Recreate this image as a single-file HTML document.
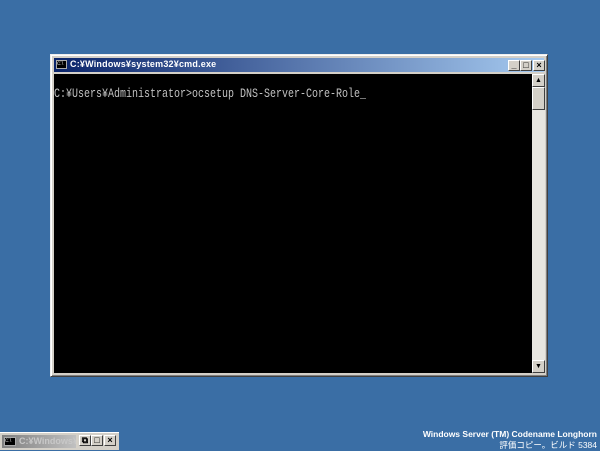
<!DOCTYPE html>
<html><head><style>
body{margin:0;width:600px;height:450px;background:#3a6ea5;position:relative;overflow:hidden;font-family:"Liberation Sans","Noto Sans CJK JP",sans-serif}
.win{position:absolute;left:50px;top:54px;width:496px;height:321px;background:#d4d0c8;border:1px solid;border-color:#eee #404040 #404040 #eee;box-shadow:inset 1px 1px #fff,inset -1px -1px #808080}
.title{position:absolute;left:3px;top:3px;width:490px;height:14px;background:linear-gradient(to right,#0a246a,#a6caf0)}
.title span{position:absolute;left:16px;top:1px;color:#fff;font-size:9px;font-weight:bold;letter-spacing:0.2px;white-space:nowrap}
.ico{position:absolute;left:2px;top:2px;width:11px;height:9px;background:#000;border:1px solid #aaa;box-sizing:border-box;color:#ccc;font-size:6px;line-height:7px;overflow:hidden}
.btn{position:absolute;top:2px;width:12px;height:11px;background:#d4d0c8;box-sizing:border-box;border:1px solid;border-color:#fff #404040 #404040 #fff;font-size:9px;font-weight:bold;line-height:9px;text-align:center;color:#000;overflow:hidden}
.client{position:absolute;left:3px;top:19px;width:478px;height:299px;background:#000}
.client div{position:absolute;left:0;top:14px;color:#c0c0c0;font-family:"Liberation Mono","Noto Sans CJK JP",monospace;font-size:10px;white-space:pre;transform:scaleY(1.25);transform-origin:0 0}
.sb{position:absolute;left:481px;top:19px;width:13px;height:299px;background:#e8e6e0}
.sbb{position:absolute;left:0;width:13px;height:13px;background:#d4d0c8;box-sizing:border-box;border:1px solid;border-color:#fff #404040 #404040 #fff;font-size:7px;text-align:center;line-height:11px}
.tb{position:absolute;left:0;top:432px;width:119px;height:18px;background:#d4d0c8;border-top:1px solid #fff;box-sizing:border-box}
.tbt{position:absolute;left:2px;top:2px;width:74px;height:13px;background:linear-gradient(to right,#808080,#c0c0c0);overflow:hidden}
.br{position:absolute;right:3px;color:#fff;font-size:8.5px;font-weight:bold;text-align:right;white-space:nowrap}
</style></head><body>
<div class="win">
 <div class="title"><div class="ico">c:\</div><span>C:¥Windows¥system32¥cmd.exe</span>
  <div class="btn" style="left:454px">_</div><div class="btn" style="left:466px">□</div><div class="btn" style="left:479px">×</div>
 </div>
 <div class="client"><div>C:¥Users¥Administrator&gt;ocsetup DNS-Server-Core-Role_</div></div>
 <div class="sb"><div class="sbb" style="top:0">▲</div><div class="sbb" style="top:13px;height:23px"></div><div class="sbb" style="bottom:0">▼</div></div>
</div>
<div class="tb"><div class="tbt"><div class="ico" style="left:2px;top:2px;width:12px">c:\</div><span style="position:absolute;left:17px;top:1px;font-size:9px;font-weight:bold;color:#c8c8c8;white-space:nowrap">C:¥Windows¥</span></div>
<div class="btn" style="left:79px;top:2px">⧉</div><div class="btn" style="left:91px;top:2px">□</div><div class="btn" style="left:104px;top:2px">×</div></div>
<div class="br" style="top:429px">Windows Server (TM) Codename Longhorn</div>
<div class="br" style="top:439px;font-weight:normal">評価コピー。ビルド 5384</div>
</body></html>
